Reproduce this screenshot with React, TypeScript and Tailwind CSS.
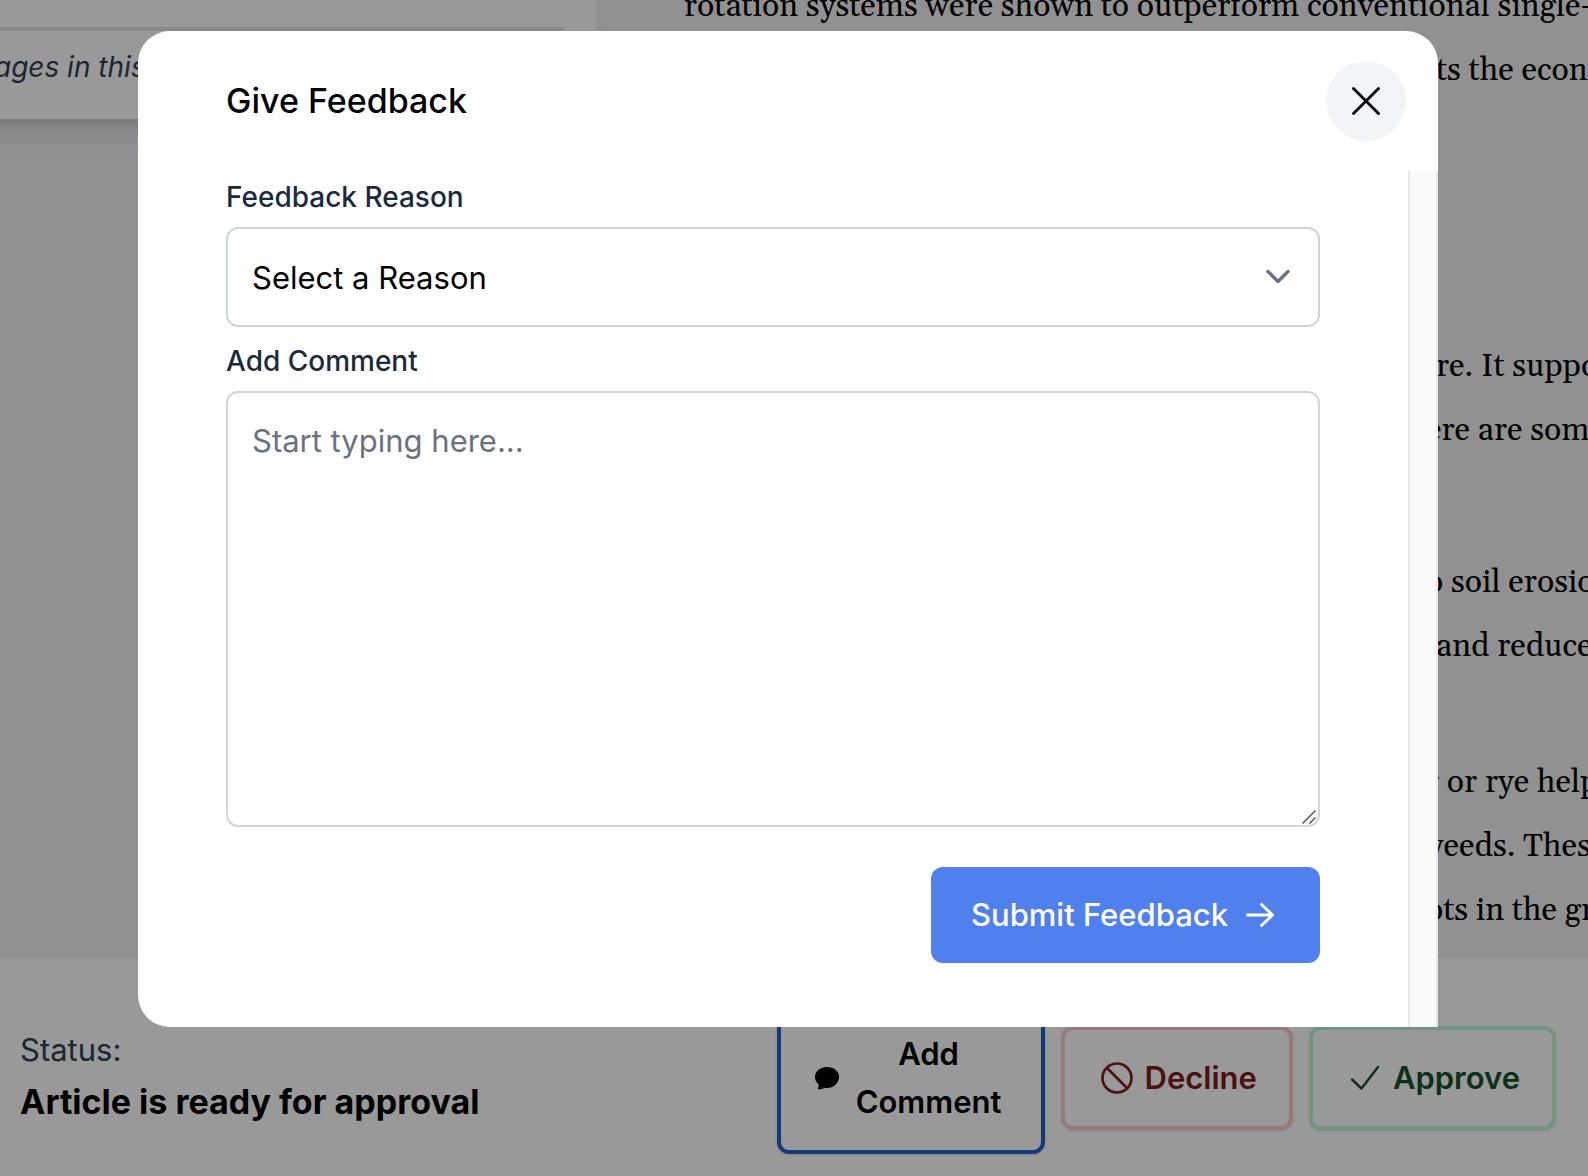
import React, { useState } from 'react';

interface ActionButtonProps {
  className: string;
  icon: React.ReactNode;
  children: React.ReactNode;
}

const articleBlocks = [
  {
    id: 'trials',
    className: 'pb-[232px]',
    lines: [
      { text: 'rotation systems were shown to outperform conventional single-', indent: '' },
      { text: 'ts the econo', indent: 'pl-[752px]' },
    ],
  },
  {
    id: 'summary',
    className: 'pb-[88px]',
    lines: [
      { text: 're. It suppo', indent: 'pl-[752px]' },
      { text: 'ere are some', indent: 'pl-[742px]' },
    ],
  },
  {
    id: 'erosion',
    className: 'pb-[72px]',
    lines: [
      { text: 'o soil erosion', indent: 'pl-[742px]' },
      { text: 'and reduce', indent: 'pl-[752px]' },
    ],
  },
  {
    id: 'cover',
    className: '',
    lines: [
      { text: 'r or rye help', indent: 'pl-[742px]' },
      { text: 'weeds. These', indent: 'pl-[736px]' },
      { text: 'ots in the gr', indent: 'pl-[742px]' },
    ],
  },
];

const reasons = ['Factual error', 'Style', 'Formatting'];

const CloseIcon = () => (
  <svg viewBox="0 0 28 28" className="size-7" fill="none" stroke="currentColor" strokeWidth="2.8" strokeLinecap="round">
    <path d="M1.5 1.5 26.5 26.5M26.5 1.5 1.5 26.5" />
  </svg>
);

const ActionButton: React.FC<ActionButtonProps> = ({ className, icon, children }) => (
  <button type="button" className={`flex items-center gap-3 rounded-xl border-4 bg-white py-6 text-[31px] leading-[48px] font-semibold shadow-sm ${className}`}>
    {icon}
    <span className="flex-1 text-center">{children}</span>
  </button>
);

export default function App() {
  const [reason, setReason] = useState('');
  const [comment, setComment] = useState('');

  return (
    <div className="relative flex h-screen flex-col overflow-hidden bg-[#f0f2f6] font-[Inter,'Liberation_Sans',sans-serif] text-black">
      {/* Article view */}
      <div className="flex min-h-0 flex-1 overflow-hidden pb-[27px]">
        <aside className="w-[596px] shrink-0">
          <div className="-ml-8 h-[119px] bg-white pl-8 shadow-xl">
            <div className="mr-8 h-[31px] border-b-4 border-[#e2e8f0]" />
            <p className="-ml-1.5 pt-4 text-[28px] leading-10 text-slate-700 italic">ages in this</p>
          </div>
        </aside>
        <main className="min-w-0 flex-1 overflow-hidden bg-[#f3f2f4]/60 pl-[88px] font-[Gelasio,Georgia,'Liberation_Serif',serif] text-[32px] leading-[64px] whitespace-nowrap">
          <div className="-mt-[25px]">
            {articleBlocks.map((block) => (
              <div key={block.id} className={block.className}>
                {block.lines.map((line) => (
                  <p key={line.text} className={line.indent}>{line.text}</p>
                ))}
              </div>
            ))}
          </div>
        </main>
      </div>

      {/* Status bar */}
      <footer className="flex h-[218px] shrink-0 items-center justify-between bg-white pt-[22px] pr-8 pl-5">
        <div>
          <p className="text-[31px] leading-[48px] text-slate-700">Status:</p>
          <p className="text-[34px] leading-[56px] font-bold">Article is ready for approval</p>
        </div>
        <div className="flex items-center gap-4">
          <ActionButton
            className="w-[268px] border-[#255fcb] pr-[38px] pl-[30px]"
            icon={
              <svg viewBox="-4 -4 32 32" className="size-8 shrink-0" fill="currentColor">
                <path d="M12 1C5.500 1 0 5.300 0 11c0 3 1.400 5.700 3.800 7.700L2.800 23.500c3 0 5-.5 6.700-1.700 1 .2 1.700.2 2.500.2 6.500 0 12-4.900 12-11S18.500 1 12 1Z" />
              </svg>
            }
          >
            Add Comment
          </ActionButton>
          <ActionButton
            className="border-[#fecaca] pr-8 pl-9 text-[#7f1d1d]"
            icon={
              <svg viewBox="0 0 32 32" className="size-8 shrink-0" fill="none" stroke="currentColor" strokeWidth="2.700">
                <circle cx="16" cy="16" r="14.500" />
                <path d="m6 6 20 20" />
              </svg>
            }
          >
            Decline
          </ActionButton>
          <ActionButton
            className="border-[#bbf7d0] pr-8 pl-9 text-[#14532d]"
            icon={
              <svg viewBox="0 0 32 32" className="size-8 shrink-0" fill="none" stroke="currentColor" strokeWidth="2.500" strokeLinecap="round" strokeLinejoin="round">
                <path d="m3 17.500 9.500 9L29 5" />
              </svg>
            }
          >
            Approve
          </ActionButton>
        </div>
      </footer>

      {/* Feedback modal */}
      <div className="absolute inset-0 flex items-start bg-black/40 pt-[31px] pr-[150px] pl-[138px]">
        <div role="dialog" aria-labelledby="feedback-title" className="w-full overflow-hidden rounded-l-[32px] rounded-tr-[32px] bg-white">
          <header className="flex h-[140px] items-center justify-between pr-8 pl-[88px]">
            <h2 id="feedback-title" className="text-[34px] leading-[56px] font-medium">Give Feedback</h2>
            <button type="button" aria-label="Close" className="flex size-20 items-center justify-center rounded-full bg-slate-100">
              <CloseIcon />
            </button>
          </header>
          <div className="flex">
            <form className="flex flex-1 flex-col pr-[88px] pb-16 pl-[88px]" onSubmit={(e) => e.preventDefault()}>
              <label htmlFor="reason" className="pt-1.5 pb-2.5 text-[28px] leading-10 font-medium text-slate-800">Feedback Reason</label>
              <div className="relative">
                <select
                  id="reason"
                  value={reason}
                  onChange={(e) => setReason(e.target.value)}
                  className="block h-[100px] w-full appearance-none rounded-xl border-2 border-slate-300 bg-white px-6 pt-0.5 text-[31px] leading-[48px]"
                >
                  <option value="">Select a Reason</option>
                  {reasons.map((item) => (
                    <option key={item} value={item}>{item}</option>
                  ))}
                </select>
                <svg viewBox="0 0 24 16" className="pointer-events-none absolute top-[42px] right-[30px] h-4 w-6" fill="none" stroke="#6b7280" strokeWidth="3.500" strokeLinecap="round" strokeLinejoin="round">
                  <path d="m2 2.500 10 10 10-10" />
                </svg>
              </div>
              <label htmlFor="comment" className="pt-3.5 pb-2.5 text-[28px] leading-10 font-medium text-slate-800">Add Comment</label>
              <div className="relative">
                <textarea
                  id="comment"
                  value={comment}
                  onChange={(e) => setComment(e.target.value)}
                  placeholder="Start typing here..."
                  className="block h-[436px] w-full resize-none rounded-xl border-2 border-gray-300 px-6 py-6 text-[31px] leading-[48px] placeholder:text-gray-500"
                />
                <svg viewBox="0 0 14 14" className="pointer-events-none absolute right-1 bottom-[3px] size-3.5" fill="none" stroke="#555" strokeWidth="1.500">
                  <path d="M.5 13.500 13.500.5M7.500 13.500l6-6" />
                </svg>
              </div>
              <button type="submit" className="mt-10 flex h-24 items-center gap-[18px] self-end rounded-xl bg-[#4f80ed] pr-[46px] pl-10 text-[31px] leading-[48px] font-medium text-white">
                Submit Feedback
                <svg viewBox="0 0 28 24" className="h-6 w-7" fill="none" stroke="currentColor" strokeWidth="2.900" strokeLinecap="round" strokeLinejoin="round">
                  <path d="M1.500 12h25M15.500 1.500l11 10.500-11 10.500" />
                </svg>
              </button>
            </form>
            <div className="w-[30px] border-x-2 border-[#e8e8e8] bg-[#fafafa]" />
          </div>
        </div>
      </div>
    </div>
  );
}
